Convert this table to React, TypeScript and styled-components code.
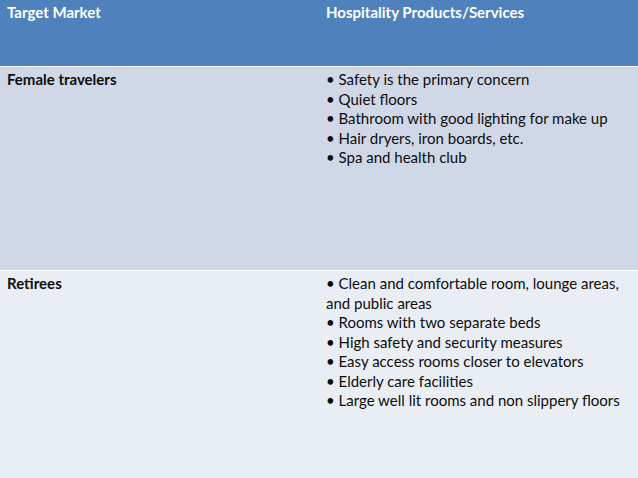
import styled, { createGlobalStyle } from 'styled-components';

const GlobalStyle = createGlobalStyle`
	html, body {
		margin: 0;
		padding: 0;
		background: #ffffff;
	}
	body {
		font-family: Lato, 'Liberation Sans', sans-serif;
	}
`;

const rows = [
	{
		market: 'Female travelers',
		items: [
			'Safety is the primary concern',
			'Quiet floors',
			'Bathroom with good lighting for make up',
			'Hair dryers, iron boards, etc.',
			'Spa and health club',
		],
	},
	{
		market: 'Retirees',
		items: [
			'Clean and comfortable room, lounge areas, and public areas',
			'Rooms with two separate beds',
			'High safety and security measures',
			'Easy access rooms closer to elevators',
			'Elderly care facilities',
			'Large well lit rooms and non slippery floors',
		],
	},
];

const App = () => {
	return (
		<>
			<GlobalStyle />
			<Table>
				<HeadCell>Target Market</HeadCell>
				<HeadCell>Hospitality Products/Services</HeadCell>
				{rows.map((row, i) => (
					<Row key={row.market} shade={i % 2 === 0 ? 'dark' : 'light'}>
						<MarketCell>{row.market}</MarketCell>
						<ItemCell>
							{row.items.map((item) => (
								<Item key={item}>• {item}</Item>
							))}
						</ItemCell>
					</Row>
				))}
			</Table>
		</>
	);
};

export default App;

// Styled Components
const Table = styled.div`
	display: grid;
	grid-template-columns: 319px 319px;
	grid-template-rows: 66px 203px 207px;
	row-gap: 1px;
	width: 638px;
	height: 478px;
	background: #ffffff;
	font-size: 15px;
	line-height: 19.5px;
	color: #0d0d0d;
	overflow: hidden;
`;

const HeadCell = styled.div`
	background: #4f81bd;
	color: #ffffff;
	font-weight: 700;
	padding: 3px 7px;
`;

const Row = styled.div<{ shade: 'dark' | 'light' }>`
	display: contents;
	& > div {
		background: ${(props) => (props.shade === 'dark' ? '#d0d8e8' : '#e9edf4')};
	}
`;

const MarketCell = styled.div`
	font-weight: 700;
	padding: 3px 7px;
`;

const ItemCell = styled.div`
	padding: 3px 7px;
`;

const Item = styled.div``;
